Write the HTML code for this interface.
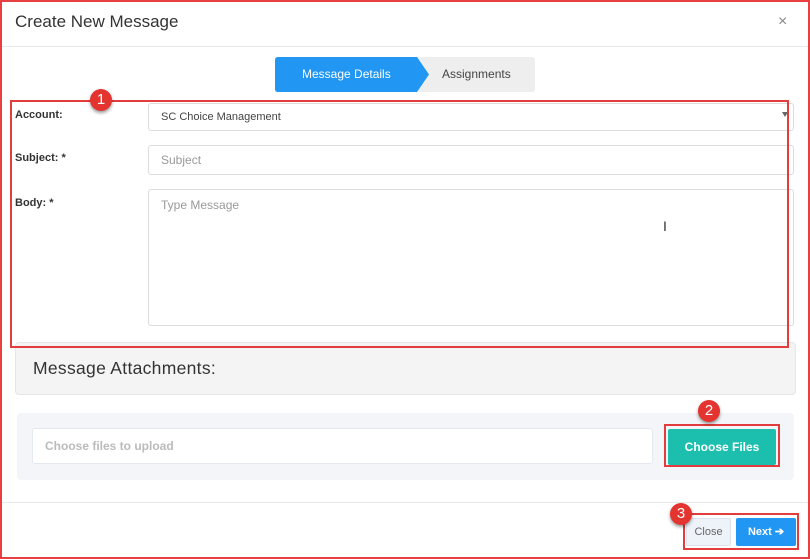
<!DOCTYPE html>
<html><head><style>
*{box-sizing:border-box;margin:0;padding:0}
body{width:810px;height:559px;overflow:hidden;background:#fff;font-family:"Liberation Sans",sans-serif;position:relative}
.a{position:absolute}
.frame{left:0;top:0;width:810px;height:559px;border:2px solid #e84040}
.lbl{font-size:11px;font-weight:bold;color:#333}
.inp{background:#fff;border:1px solid #dcdcdc;border-radius:3px;font-size:12px;color:#999;padding-left:12px}
.red{border:2px solid #e23c3c}
.badge{width:22px;height:22px;border-radius:50%;background:#e3342f;color:#fff;font-size:15px;text-align:center;line-height:22px;box-shadow:0 2px 3px rgba(0,0,0,.4)}
</style></head><body>
<div class="a frame"></div>
<div class="a" style="left:15px;top:12px;font-size:17px;color:#333">Create New Message</div>
<div class="a" style="left:778px;top:13px;font-size:16px;color:#888">×</div>
<div class="a" style="left:2px;top:46px;width:806px;height:1px;background:#e8e8e8"></div>
<div class="a" style="left:275px;top:57px;width:260px;height:35px;background:#eee;border-radius:3px"></div>
<svg class="a" style="left:275px;top:57px" width="155" height="35"><path d="M3 0H142L154 17.5L142 35H3Q0 35 0 32V3Q0 0 3 0Z" fill="#2196f3"/></svg>
<div class="a" style="left:302px;top:67px;font-size:12px;color:#fff">Message Details</div>
<div class="a" style="left:442px;top:67px;font-size:12px;color:#444">Assignments</div>
<div class="a lbl" style="left:15px;top:109px">Account:</div>
<div class="a lbl" style="left:15px;top:152px">Subject: *</div>
<div class="a lbl" style="left:15px;top:197px">Body: *</div>
<div class="a inp" style="left:148px;top:103px;width:646px;height:28px;line-height:26px;color:#444;font-size:11px">SC Choice Management</div>
<div class="a" style="left:782px;top:112px;border-left:3px solid transparent;border-right:3px solid transparent;border-top:5px solid #666"></div>
<div class="a inp" style="left:148px;top:145px;width:646px;height:30px;line-height:28px">Subject</div>
<div class="a inp" style="left:148px;top:189px;width:646px;height:137px;padding-top:8px">Type Message</div>
<div class="a" style="left:663px;top:218px;font-size:14px;color:#333">I</div>
<div class="a" style="left:15px;top:342px;width:781px;height:53px;background:#f4f4f4;border:1px solid #e6e6e6;border-radius:4px"></div>
<div class="a" style="left:33px;top:358px;font-size:17.5px;color:#333;letter-spacing:.3px">Message Attachments:</div>
<div class="a red" style="left:10px;top:100px;width:779px;height:248px"></div>
<div class="a badge" style="left:90px;top:89px">1</div>
<div class="a" style="left:17px;top:413px;width:777px;height:67px;background:#f3f5f9;border-radius:4px"></div>
<div class="a inp" style="left:32px;top:428px;width:621px;height:36px;line-height:34px;font-weight:bold;color:#bbb;font-size:12px;border-color:#e4e8f0">Choose files to upload</div>
<div class="a" style="left:668px;top:429px;width:108px;height:36px;background:#1cbfad;color:#fff;font-weight:bold;font-size:12px;text-align:center;line-height:36px;border-radius:2px">Choose Files</div>
<div class="a red" style="left:664px;top:424px;width:116px;height:43px"></div>
<div class="a badge" style="left:698px;top:400px">2</div>
<div class="a" style="left:2px;top:502px;width:806px;height:1px;background:#e8e8e8"></div>
<div class="a" style="left:686px;top:518px;width:45px;height:28px;background:#eef3fa;border:1px solid #dde3ec;border-radius:2px;font-size:11px;color:#666;text-align:center;line-height:26px">Close</div>
<div class="a" style="left:736px;top:518px;width:60px;height:28px;background:#2196f3;border-radius:2px;font-size:11px;font-weight:bold;color:#fff;text-align:center;line-height:28px">Next ➔</div>
<div class="a red" style="left:683px;top:513px;width:116px;height:37px"></div>
<div class="a badge" style="left:670px;top:503px">3</div>
</body></html>
